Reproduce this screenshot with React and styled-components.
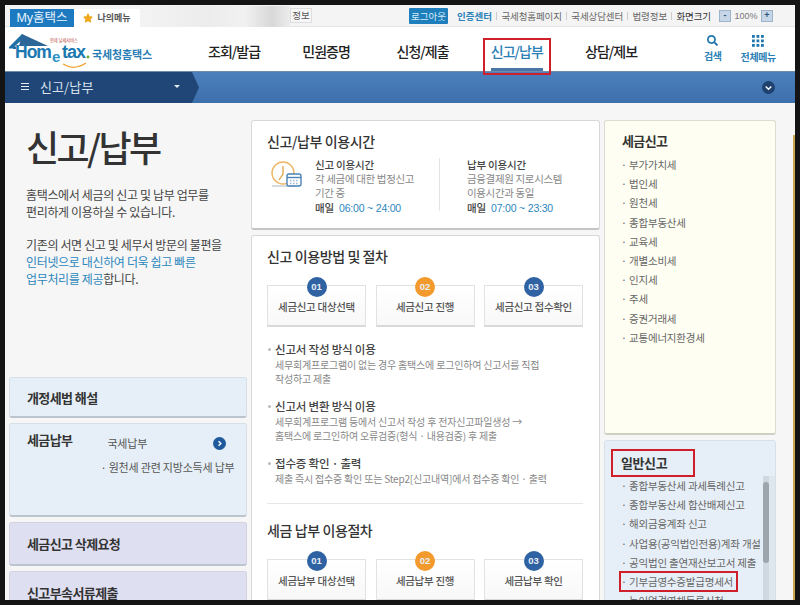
import React from "react";
import styled, { createGlobalStyle } from "styled-components";
import { FaSearch, FaStar } from "react-icons/fa";

const GlobalStyle = createGlobalStyle`
  html, body {
    margin: 0;
    padding: 0;
    background: #141414;
  }
  *, *::before, *::after {
    box-sizing: border-box;
  }
  body {
    font-family: "Noto Sans CJK KR", "Noto Sans", sans-serif;
  }
`;

const taxList = [
  "부가가치세",
  "법인세",
  "원천세",
  "종합부동산세",
  "교육세",
  "개별소비세",
  "인지세",
  "주세",
  "증권거래세",
  "교통에너지환경세",
];

const generalList = [
  "종합부동산세 과세특례신고",
  "종합부동산세 합산배제신고",
  "해외금융계좌 신고",
  "사업용(공익법인전용)계좌 개설",
  "공익법인 출연재산보고서 제출",
  "기부금영수증발급명세서",
  "농어업경영체등록신청",
];

const reportSteps = ["세금신고 대상선택", "세금신고 진행", "세금신고 접수확인"];
const payScripts = ["세금납부 대상선택", "세금납부 진행", "세금납부 확인"];

const methods = [
  {
    title: "신고서 작성 방식 이용",
    lines: ["세무회계프로그램이 없는 경우 홈택스에 로그인하여 신고서를 직접", "작성하고 제출"],
  },
  {
    title: "신고서 변환 방식 이용",
    lines: ["세무회계프로그램 등에서 신고서 작성 후 전자신고파일생성 →", "홈택스에 로그인하여 오류검증(형식 · 내용검증) 후 제출"],
  },
  {
    title: "접수증 확인 · 출력",
    lines: ["제출 즉시 접수증 확인 또는 Step2[신고내역]에서 접수증 확인 · 출력"],
  },
];

const Steps = ({ items }) => (
  <StepRow>
    {items.map((label, i) => (
      <StepBox key={label}>
        <Badge $orange={i === 1}>0{i + 1}</Badge>
        {label}
      </StepBox>
    ))}
  </StepRow>
);

const Logo = () => (
  <LogoWrap>
    <svg width="82" height="38" viewBox="0 0 82 38">
      <path d="M0 16 L13 3 L16 6 L5.5 15.5 L7 15.5 L7 18 L4 18 L4 17.5 L0 17.5 Z" fill="#1d6fa5" />
      <path d="M13 3 L39 15 L16 15 L10 15 Z" fill="#2c6598" />
      <text x="6" y="27" fontFamily="Liberation Sans" fontWeight="700" fontSize="17.5" letterSpacing="-1" fill="#1b78b0">Hom</text>
      <text x="43" y="31" fontFamily="Liberation Sans" fontWeight="700" fontSize="15" fill="#2f93c4">e</text>
      <text x="53" y="27" fontFamily="Liberation Sans" fontWeight="700" fontSize="18" letterSpacing="-1" fill="#1b78b0">tax</text>
      <circle cx="79" cy="26" r="1.4" fill="#6aa62e" />
      <path d="M54 33 Q65 40 77 32" fill="none" stroke="#efa22f" strokeWidth="1.2" />
      <text x="41" y="11" fontFamily="Noto Sans CJK KR" fontSize="4.2" fill="#b9433a">언제 날세서비스</text>
    </svg>
    <LogoName>국세청홈택스</LogoName>
  </LogoWrap>
);

const ClockIcon = () => (
  <svg width="32" height="30" viewBox="0 0 32 30">
    <path d="M1 26 H24" stroke="#d5dbe3" strokeWidth="2" />
    <circle cx="12" cy="13" r="11" fill="none" stroke="#edb765" strokeWidth="1.4" />
    <path d="M12 6 V14 L8 20" fill="none" stroke="#e2a445" strokeWidth="1.3" />
    <rect x="16" y="14" width="14" height="12" rx="2" fill="#fff" stroke="#4a83b5" strokeWidth="1.4" />
    <path d="M16 17.5 H30" stroke="#4a83b5" strokeWidth="1.4" />
    <path d="M19 20.5 H27 M19 23.5 H27" stroke="#9dbbd6" strokeWidth="1.4" strokeDasharray="1.5 1.5" />
  </svg>
);

const GridIcon = () => (
  <svg width="12" height="12" viewBox="0 0 12 12" fill="#1f77b0">
    {[0, 4.5, 9].flatMap((y) =>
      [0, 4.5, 9].map((x) => <rect key={`${x}-${y}`} x={x} y={y} width="2.8" height="2.8" />)
    )}
  </svg>
);

const CircleArrow = ({ size, bg, down }) => (
  <svg width={size} height={size} viewBox="0 0 14 14">
    <circle cx="7" cy="7" r="7" fill={bg} />
    <path
      d={down ? "M4 6 L7 9 L10 6" : "M6 4.5 L8.5 7 L6 9.5"}
      fill="none"
      stroke="#fff"
      strokeWidth="1.5"
    />
  </svg>
);

export default function App() {
  return (
    <Frame>
      <GlobalStyle />
      <TopBar>
        <MyTab>My홈택스</MyTab>
        <MenuTab>
          <FaStar size={10} color="#f0a81c" />
          나의메뉴
        </MenuTab>
        <BlurBlock />
        <SmallBtn>정보</SmallBtn>
        <TopLinks>
          <LogoutBtn>로그아웃</LogoutBtn>
          <CertLink>인증센터</CertLink>
          <Sep />
          <TopLink>국세청홈페이지</TopLink>
          <Sep />
          <TopLink>국세상담센터</TopLink>
          <Sep />
          <TopLink>법령정보</TopLink>
          <Sep />
          <TopLink $dark>화면크기</TopLink>
          <Zoom>
            <ZoomBtn>-</ZoomBtn>
            100%
            <ZoomBtn>+</ZoomBtn>
          </Zoom>
        </TopLinks>
      </TopBar>

      <Header>
        <Logo />
        <MainNav>
          <NavItem>조회/발급</NavItem>
          <NavItem>민원증명</NavItem>
          <NavItem>신청/제출</NavItem>
          <NavItem $active>신고/납부</NavItem>
          <NavItem>상담/제보</NavItem>
        </MainNav>
        <HeadTools>
          <HeadTool>
            <FaSearch size={11} color="#1f77b0" />
            검색
          </HeadTool>
          <HeadTool>
            <GridIcon />
            전체메뉴
          </HeadTool>
        </HeadTools>
      </Header>

      <BlueBar>
        <Crumb>
          <CrumbLeft>
            <Burger />
            신고/납부
          </CrumbLeft>
          <Caret />
        </Crumb>
        <CircleArrow size={13} bg="#1f4170" down />
      </BlueBar>

      <Content>
        <GoldStrip />
        <LeftCol>
          <Intro>
            <PageTitle>신고/납부</PageTitle>
            <IntroText>
              홈택스에서 세금의 신고 및 납부 업무를
              <br />
              편리하게 이용하실 수 있습니다.
            </IntroText>
            <IntroText>
              기존의 서면 신고 및 세무서 방문의 불편을
              <br />
              <Hl>인터넷으로 대신하여 더욱 쉽고 빠른</Hl>
              <br />
              <Hl>업무처리를 제공</Hl>합니다.
            </IntroText>
          </Intro>
          <SideCard $h={41}>
            <SideTitle>개정세법 해설</SideTitle>
          </SideCard>
          <PayCard>
            <SideTitle>세금납부</SideTitle>
            <PayBody>
              <PayHead>
                국세납부
                <CircleArrow size={13} bg="#1f5a9c" />
              </PayHead>
              <PayItem>· 원천세 관련 지방소득세 납부</PayItem>
            </PayBody>
          </PayCard>
          <SideCard $h={44} $purple>
            <SideTitle>세금신고 삭제요청</SideTitle>
          </SideCard>
          <SideCard $h={44} $purple>
            <SideTitle>신고부속서류제출</SideTitle>
          </SideCard>
        </LeftCol>

        <MidCol>
          <TimeCard>
            <CardTitle>신고/납부 이용시간</CardTitle>
            <TimeRow>
              <IconCell>
                <ClockIcon />
              </IconCell>
              <TimeCol>
                <TimeHead>신고 이용시간</TimeHead>
                <TimeText>각 세금에 대한 법정신고</TimeText>
                <TimeText>기간 중</TimeText>
                <TimeHead>
                  매일 <TimeVal>06:00 ~ 24:00</TimeVal>
                </TimeHead>
              </TimeCol>
              <TimeDivider />
              <TimeCol>
                <TimeHead>납부 이용시간</TimeHead>
                <TimeText>금융결제원 지로시스템</TimeText>
                <TimeText>이용시간과 동일</TimeText>
                <TimeHead>
                  매일 <TimeVal>07:00 ~ 23:30</TimeVal>
                </TimeHead>
              </TimeCol>
            </TimeRow>
          </TimeCard>

          <MethodCard>
            <CardTitle>신고 이용방법 및 절차</CardTitle>
            <Steps items={reportSteps} />
            <MethodList>
              {methods.map((m) => (
                <Method key={m.title}>
                  <MethodTitle>{m.title}</MethodTitle>
                  {m.lines.map((l) => (
                    <MethodLine key={l}>{l}</MethodLine>
                  ))}
                </Method>
              ))}
            </MethodList>
            <Rule />
            <CardTitle>세금 납부 이용절차</CardTitle>
            <Steps items={payScripts} />
          </MethodCard>
        </MidCol>

        <RightCol>
          <TaxCard>
            <TaxTitle>세금신고</TaxTitle>
            <TaxList>
              {taxList.map((t) => (
                <TaxItem key={t}>{t}</TaxItem>
              ))}
            </TaxList>
          </TaxCard>
          <GeneralCard>
            <GeneralTitle>일반신고</GeneralTitle>
            <GeneralBody>
              <GeneralList>
                {generalList.map((t, i) => (
                  <TaxItem key={t} $boxed={i === 5}>
                    {t}
                  </TaxItem>
                ))}
              </GeneralList>
              <ScrollTrack>
                <ScrollThumb />
              </ScrollTrack>
            </GeneralBody>
          </GeneralCard>
        </RightCol>
      </Content>
    </Frame>
  );
}

const Frame = styled.div`
  width: 800px;
  height: 605px;
  padding: 5px;
  overflow: hidden;
  display: flex;
  flex-direction: column;
`;

const TopBar = styled.div`
  height: 22px;
  flex: none;
  display: flex;
  align-items: center;
  background: #f4f4f4;
  border-bottom: 1px solid #e4e4e4;
  padding-left: 5px;
`;

const MyTab = styled.div`
  width: 64px;
  height: 18px;
  margin-top: 4px;
  background: #1d7ac0;
  color: #e8f3fb;
  font-family: "Liberation Sans", "Noto Sans CJK KR", sans-serif;
  font-size: 12.5px;
  line-height: 18px;
  text-align: center;
`;

const MenuTab = styled.div`
  width: 66px;
  height: 18px;
  margin-top: 4px;
  background: #fff;
  color: #555;
  font-size: 9px;
  font-weight: 700;
  display: flex;
  align-items: center;
  justify-content: center;
  gap: 4px;
`;

const BlurBlock = styled.div`
  width: 150px;
  height: 22px;
  margin-top: 3px;
  background: linear-gradient(90deg, #f3f3f3 0%, #ececec 45%, #f1f1f1 70%, #d8d8d8 88%, #ececec 100%);
`;

const SmallBtn = styled.div`
  width: 22px;
  height: 15px;
  background: #f7f7f7;
  border: 1px solid #ddd;
  color: #555;
  font-size: 9.5px;
  line-height: 13px;
  text-align: center;
`;

const TopLinks = styled.div`
  margin-left: auto;
  padding-right: 22px;
  display: flex;
  align-items: center;
  font-size: 9.5px;
  color: #666;
`;

const LogoutBtn = styled.div`
  width: 39px;
  height: 16px;
  margin-right: 9px;
  background: #1f7fbc;
  color: #d6ecf7;
  line-height: 16px;
  text-align: center;
  border-radius: 1px;
`;

const CertLink = styled.span`
  color: #2a82b8;
  font-weight: 700;
`;

const TopLink = styled.span`
  color: ${(p) => (p.$dark ? "#333" : "#666")};
  letter-spacing: -0.1px;
`;

const Sep = styled.i`
  width: 1px;
  height: 8px;
  margin: 0 4.2px;
  background: #ccc;
`;

const Zoom = styled.div`
  display: flex;
  align-items: center;
  gap: 3.5px;
  margin-left: 8px;
  color: #777;
  font-family: "Liberation Sans", sans-serif;
  font-size: 9px;
`;

const ZoomBtn = styled.b`
  width: 12px;
  height: 12px;
  background: #c6d6e6;
  border: 1px solid #9db4cb;
  color: #2c5378;
  font-size: 9px;
  line-height: 9px;
  text-align: center;
`;

const Header = styled.div`
  height: 44px;
  flex: none;
  background: #fff;
  display: flex;
  align-items: center;
  padding-left: 4px;
`;

const LogoWrap = styled.div`
  width: 184px;
  height: 38px;
  align-self: flex-start;
  margin-top: 4px;
  display: flex;
  align-items: center;
`;

const LogoName = styled.span`
  margin: 8px 0 0 1px;
  color: #2a7db5;
  font-size: 11px;
  font-weight: 700;
  letter-spacing: -0.1px;
  white-space: nowrap;
`;

const MainNav = styled.div`
  width: 476px;
  height: 100%;
  display: flex;
  justify-content: space-between;
  padding-left: 15px;
  padding-right: 32px;
`;

const NavItem = styled.div`
  position: relative;
  width: 52px;
  white-space: nowrap;
  line-height: 49px;
  font-size: 14px;
  font-weight: 500;
  letter-spacing: -0.95px;
  color: ${(p) => (p.$active ? "#2a80b5" : "#222")};

  ${(p) =>
    p.$active &&
    `
    &::before {
      content: "";
      position: absolute;
      left: -8px;
      right: -8px;
      top: 11px;
      height: 37px;
      border: 2px solid #cf1f2b;
      z-index: 2;
    }
    &::after {
      content: "";
      position: absolute;
      left: 0;
      right: 0;
      bottom: 0;
      height: 3px;
      background: #4a75a8;
    }
  `}
`;

const HeadTools = styled.div`
  display: flex;
  gap: 19px;
  padding-left: 35px;
`;

const HeadTool = styled.div`
  display: flex;
  flex-direction: column;
  align-items: center;
  gap: 3px;
  color: #2a80b5;
  font-size: 10px;
  font-weight: 700;
  letter-spacing: -0.4px;
  line-height: 14px;
  white-space: nowrap;
`;

const BlueBar = styled.div`
  position: relative;
  height: 32px;
  flex: none;
  display: flex;
  align-items: center;
  justify-content: space-between;
  padding-right: 20px;
  border-top: 1px solid #6f8eae;
  background: linear-gradient(180deg, #4c80bd 0%, #3c6fac 100%);
`;

const Crumb = styled.div`
  width: 194px;
  height: 100%;
  display: flex;
  align-items: center;
  justify-content: space-between;
  padding: 0 19px 3px 16px;
  background: #1f4677;
  clip-path: polygon(0 0, 187px 0, 100% 50%, 187px 100%, 0 100%);
  color: #d9e2ec;
  font-size: 13px;
`;

const CrumbLeft = styled.div`
  display: flex;
  align-items: center;
  gap: 11px;
  letter-spacing: 0.1px;
`;

const Burger = styled.i`
  width: 8px;
  height: 7px;
  border-top: 1px solid #e5ebf2;
  border-bottom: 1px solid #e5ebf2;
  position: relative;

  &::after {
    content: "";
    position: absolute;
    left: 0;
    right: 0;
    top: 2px;
    height: 1px;
    background: #e5ebf2;
  }
`;

const Caret = styled.i`
  border-top: 3px solid #e5ebf2;
  border-left: 3px solid transparent;
  border-right: 3px solid transparent;
`;

const Content = styled.div`
  position: relative;
  flex: 1;
  min-height: 0;
  overflow: hidden;
  display: flex;
  background: #f6f6f6;
  padding-top: 17px;
`;

const GoldStrip = styled.div`
  position: absolute;
  right: 0;
  top: 32px;
  bottom: 0;
  width: 2px;
  background: #c9a94e;
`;

const LeftCol = styled.div`
  width: 246px;
  flex: none;
  margin-top: -17px;
  padding: 0 4px;
`;

const Intro = styled.div`
  height: 274px;
  padding: 17px 0 0 17px;
`;

const PageTitle = styled.h1`
  margin: 0 0 14px;
  color: #333;
  font-size: 36px;
  font-weight: 500;
  line-height: 52px;
  letter-spacing: -2.6px;
`;

const IntroText = styled.p`
  margin: 0 0 16px;
  color: #444;
  font-size: 12px;
  line-height: 17px;
  letter-spacing: -0.35px;
  white-space: nowrap;
`;

const Hl = styled.span`
  color: #2d87bd;
`;

const SideCard = styled.div`
  height: ${(p) => p.$h}px;
  margin-bottom: 5px;
  display: flex;
  align-items: center;
  padding-left: 17px;
  background: ${(p) => (p.$purple ? "#dfdff2" : "#e6eff7")};
  border: 1px solid ${(p) => (p.$purple ? "#d2d2e2" : "#d5e0e9")};
  border-bottom: 2px solid #bcc4cd;
  border-radius: 3px;
`;

const SideTitle = styled.div`
  color: #333;
  font-size: 13px;
  font-weight: 700;
  letter-spacing: -0.6px;
  white-space: nowrap;
`;

const PayCard = styled.div`
  height: 94px;
  margin-bottom: 5px;
  display: flex;
  padding: 6px 0 0 17px;
  background: #e6eff7;
  border: 1px solid #d5e0e9;
  border-bottom: 2px solid #bcc4cd;
  border-radius: 3px;
`;

const PayBody = styled.div`
  margin: 3px 0 0 35px;
  flex: 1;
  color: #555;
  font-size: 11px;
  letter-spacing: -0.2px;
`;

const PayHead = styled.div`
  display: flex;
  align-items: center;
  justify-content: space-between;
  padding: 2px 20px 0 0;
`;

const PayItem = styled.div`
  margin: 8px 0 0 -7px;
  white-space: nowrap;
`;

const MidCol = styled.div`
  width: 349px;
  flex: none;
  margin-right: 4px;
  display: flex;
  flex-direction: column;
  gap: 5px;
`;

const Card = styled.div`
  background: #fff;
  border: 1px solid #d8d8d8;
  border-bottom: 2px solid #c4c4c4;
  border-radius: 3px;
  padding-left: 15px;
`;

const TimeCard = styled(Card)`
  height: 110px;
  flex: none;
  padding-top: 9px;
`;

const MethodCard = styled(Card)`
  flex: none;
  padding-top: 9px;
  padding-right: 16px;
`;

const CardTitle = styled.h2`
  margin: 0;
  color: #333;
  font-size: 14px;
  font-weight: 500;
  line-height: 22px;
  letter-spacing: -0.4px;
`;

const TimeRow = styled.div`
  display: flex;
  margin-top: 6px;
`;

const IconCell = styled.div`
  width: 48px;
  padding: 2px 0 0 4px;
`;

const TimeCol = styled.div`
  width: 124px;
  white-space: nowrap;
`;

const TimeHead = styled.div`
  color: #444;
  font-size: 10.5px;
  font-weight: 500;
  line-height: 14px;
  letter-spacing: -0.2px;

  &:last-child {
    margin-top: 1px;
  }
`;

const TimeText = styled.div`
  color: #888;
  font-size: 10.5px;
  line-height: 14px;
  letter-spacing: -0.35px;
`;

const TimeVal = styled.span`
  margin-left: 3px;
  color: #2d87bd;
  font-family: "Liberation Sans", sans-serif;
  font-weight: 400;
`;

const TimeDivider = styled.div`
  width: 1px;
  height: 53px;
  margin-right: 27px;
  background: #e4e4e4;
`;

const StepRow = styled.div`
  display: flex;
  justify-content: space-between;
  margin-top: 18px;
`;

const StepBox = styled.div`
  position: relative;
  width: 99px;
  height: 42px;
  padding-top: 11px;
  background: linear-gradient(180deg, #fff 0%, #f8f8f8 100%);
  border: 1px solid #e2e2e2;
  border-bottom: 2px solid #d9d9d9;
  color: #555;
  font-size: 10.5px;
  font-weight: 500;
  line-height: 20px;
  letter-spacing: -0.3px;
  text-align: center;
  white-space: nowrap;
`;

const Badge = styled.span`
  position: absolute;
  left: 50%;
  top: -9px;
  width: 20px;
  height: 20px;
  margin-left: -10px;
  border-radius: 50%;
  background: ${(p) => (p.$orange ? "#f39a2d" : "#2f62a3")};
  color: #e8eef6;
  font-family: "Liberation Sans", sans-serif;
  font-size: 9.5px;
  font-weight: 700;
  line-height: 20px;
  letter-spacing: 0;
`;

const MethodList = styled.div`
  margin-top: 13px;
`;

const Method = styled.div`
  margin-bottom: 12px;
  padding-left: 8px;
  position: relative;

  &::before {
    content: "";
    position: absolute;
    left: 1px;
    top: 8px;
    width: 3px;
    height: 3px;
    border-radius: 50%;
    background: #bbb;
  }
`;

const MethodTitle = styled.div`
  color: #444;
  font-size: 11.5px;
  font-weight: 500;
  line-height: 18px;
  letter-spacing: -0.2px;
`;

const MethodLine = styled.div`
  color: #888;
  font-size: 10px;
  line-height: 13.5px;
  letter-spacing: -0.2px;
  white-space: nowrap;
`;

const Rule = styled.div`
  height: 1px;
  margin: 17px 0 15px;
  background: #e6e6e6;
`;

const RightCol = styled.div`
  width: 172px;
  flex: none;
  display: flex;
  flex-direction: column;
  gap: 5px;
`;

const TaxCard = styled.div`
  height: 315px;
  flex: none;
  padding: 8px 0 0 17px;
  background: #fefef2;
  border: 1px solid #dcdcd0;
  border-bottom: 2px solid #cfcfc4;
  border-radius: 3px;
`;

const TaxTitle = styled.div`
  color: #333;
  font-size: 13px;
  font-weight: 700;
  line-height: 24px;
  letter-spacing: -0.6px;
`;

const TaxList = styled.ul`
  margin: 2px 0 0;
  padding: 0;
  list-style: none;
`;

const TaxItem = styled.li`
  position: relative;
  height: 19.2px;
  padding-left: 7px;
  color: #666;
  font-size: 10.5px;
  line-height: 19px;
  letter-spacing: -0.2px;
  white-space: nowrap;

  &::before {
    content: "·";
    position: absolute;
    left: -1px;
  }

  ${(p) =>
    p.$boxed &&
    `
    &::after {
      content: "";
      position: absolute;
      left: -3px;
      top: -1px;
      width: 119px;
      height: 21px;
      border: 2px solid #cf1f2b;
    }
  `}
`;

const GeneralCard = styled.div`
  height: 180px;
  flex: none;
  padding: 8px 0 0 17px;
  background: #e6eff7;
  border: 1px solid #d5e0e9;
  border-radius: 3px;
`;

const GeneralTitle = styled.div`
  width: 84px;
  height: 28px;
  margin-left: -11px;
  padding-left: 8px;
  border: 2px solid #cf1f2b;
  color: #333;
  font-size: 13px;
  font-weight: 700;
  line-height: 24px;
  letter-spacing: -0.4px;
`;

const GeneralBody = styled.div`
  display: flex;
  margin-top: -1px;
`;

const GeneralList = styled.ul`
  flex: 1;
  min-width: 0;
  margin: 0;
  padding: 0;
  list-style: none;
`;

const ScrollTrack = styled.div`
  width: 12px;
  flex: none;
  padding-top: 6px;
  background: linear-gradient(90deg, #cfd8e0 0, #cfd8e0 50%, #dfe7ee 50%);
`;

const ScrollThumb = styled.div`
  width: 6px;
  height: 81px;
  border-radius: 3px;
  background: #9da5ad;
`;
